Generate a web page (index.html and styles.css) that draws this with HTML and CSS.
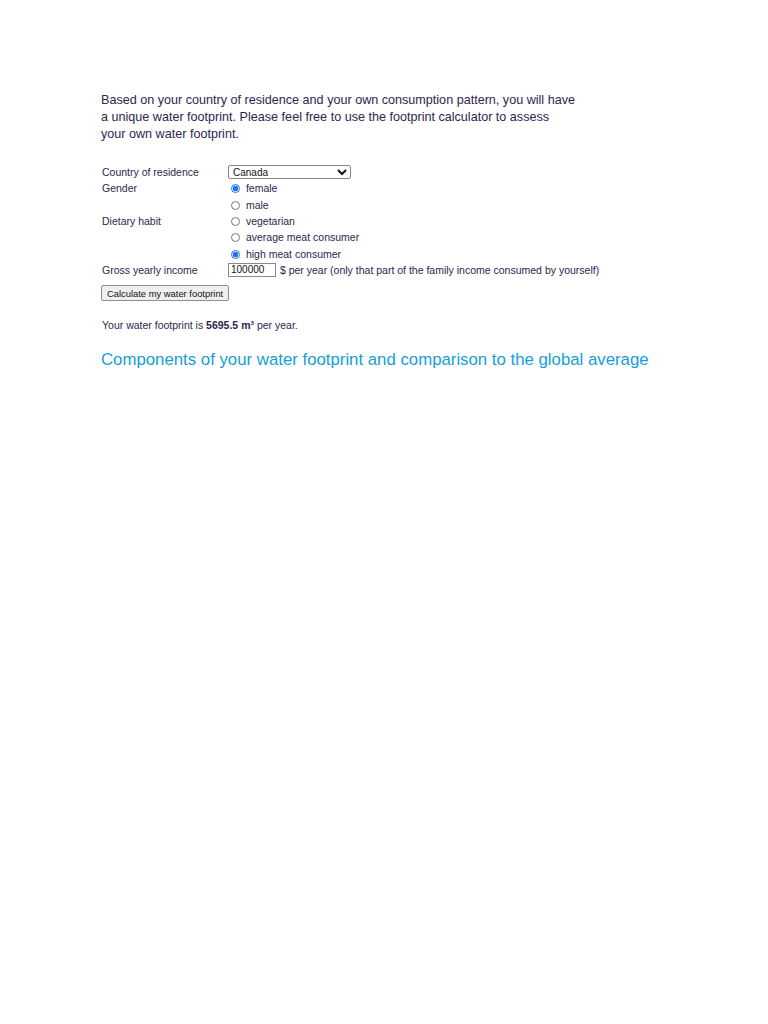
FILE: index.html
```html
<!DOCTYPE html>
<html lang="en">
<head>
  <meta charset="utf-8">
  <title>Water footprint calculator</title>
  <link rel="stylesheet" href="styles.css">
</head>
<body>
  <div class="page">
    <p class="intro">
      Based on your country of residence and your own consumption pattern, you will have<br>
      a unique water footprint. Please feel free to use the footprint calculator to assess<br>
      your own water footprint.
    </p>

    <form class="calc">
      <table class="calc-table">
        <tr>
          <td class="label">Country of residence</td>
          <td>
            <select class="country">
              <option>Canada</option>
            </select>
          </td>
        </tr>
        <tr>
          <td class="label">Gender</td>
          <td><label class="opt"><input type="radio" name="gender" checked> female</label></td>
        </tr>
        <tr>
          <td></td>
          <td><label class="opt"><input type="radio" name="gender"> male</label></td>
        </tr>
        <tr>
          <td class="label">Dietary habit</td>
          <td><label class="opt"><input type="radio" name="diet"> vegetarian</label></td>
        </tr>
        <tr>
          <td></td>
          <td><label class="opt"><input type="radio" name="diet"> average meat consumer</label></td>
        </tr>
        <tr>
          <td></td>
          <td><label class="opt"><input type="radio" name="diet" checked> high meat consumer</label></td>
        </tr>
        <tr>
          <td class="label">Gross yearly income</td>
          <td><input class="income" type="text" value="100000"> $ per year (only that part of the family income consumed by yourself)</td>
        </tr>
      </table>
      <button type="button" class="calc-btn">Calculate my water footprint</button>
    </form>

    <p class="result">Your water footprint is <b>5695.5 m³</b> per year.</p>

    <h2 class="components">Components of your water footprint and comparison to the global average</h2>
  </div>
</body>
</html>
```

FILE: styles.css
```css
* { box-sizing: border-box; }
body {
  margin: 0;
  background: #fff;
  color: #30244f;
  font-family: "Liberation Sans", Arial, sans-serif;
}

.page {
  padding: 92px 0 0 101px;
}

/* Texto de introdução */
.intro {
  margin: 0;
  font-size: 12.6px;
  line-height: 17px;
}

/* Formulário */
.calc {
  margin-top: 21px;
}
.calc-table {
  border-collapse: collapse;
  font-size: 10.5px;
}
.calc-table td {
  padding: 0;
  height: 16.3px;
  vertical-align: middle;
  white-space: nowrap;
}
.calc-table td.label {
  width: 127px;
  padding-left: 1px;
}
.country {
  width: 123px;
  height: 14px;
  font: 10px "Liberation Sans", Arial, sans-serif;
  padding: 0;
  margin: 0;
  border: 1px solid #888;
  border-radius: 2px;
  background: #fff;
  color: #111;
}
.opt input[type=radio] {
  width: 9px;
  height: 9px;
  margin: 0 3px 0 3px;
  vertical-align: -1px;
  accent-color: #1a73e8;
}
.income {
  width: 48px;
  height: 14px;
  font: 10px "Liberation Sans", Arial, sans-serif;
  padding: 0 2px;
  margin: 0 1px 0 0;
  border: 1px solid #888;
  color: #111;
}

.calc-btn {
  margin-top: 7px;
  height: 16px;
  padding: 0 5px;
  font: 9.4px "Liberation Sans", Arial, sans-serif;
  color: #111;
  background: #efefef;
  border: 1px solid #8f8f8f;
  border-radius: 2px;
}

/* Resultado */
.result {
  margin: 18px 0 0 1px;
  font-size: 10.5px;
}

.components {
  margin: 19px 0 0;
  font-size: 16.8px;
  font-weight: normal;
  color: #14a0d8;
}
```
